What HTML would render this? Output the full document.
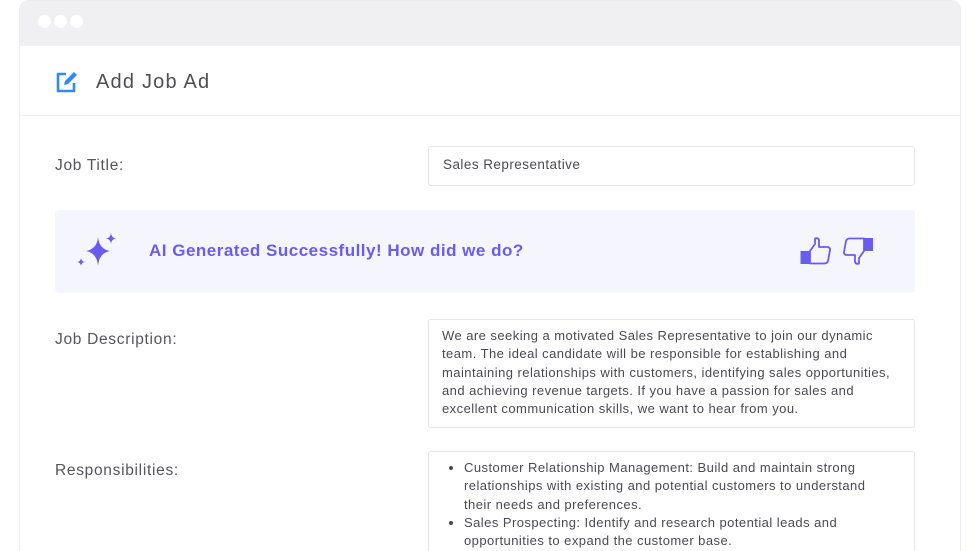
<!DOCTYPE html>
<html><head><style>
*{margin:0;padding:0;box-sizing:border-box}
html,body{width:980px;height:551px;overflow:hidden}
body{background:#fff;font-family:"Liberation Sans",sans-serif;position:relative}
.win{position:absolute;left:19px;top:0;width:942px;height:551px;border:1px solid #ececf0;border-bottom:none;border-radius:10px 10px 0 0;overflow:hidden;background:#fff}
.bar{height:45px;background:#f0f0f3}
.dot{position:absolute;top:14px;width:13px;height:13px;border-radius:50%;background:#fff}
.hdr{position:absolute;left:0;top:45px;width:100%;height:70px;border-bottom:1px solid #f0f0f2}
.t{position:absolute;color:#4a4a52;white-space:nowrap}
.box{position:absolute;border:1px solid #e6e6ea;border-radius:3px;background:#fff;font-size:13px;color:#4a4a52;letter-spacing:0.45px;white-space:nowrap;overflow:hidden}
.lbl{position:absolute;font-size:15.5px;color:#55555c;letter-spacing:0.7px}
</style></head><body>
<div class="win">
<div class="bar"></div>
<div class="dot" style="left:18px"></div><div class="dot" style="left:34px"></div><div class="dot" style="left:50px"></div>
<div class="hdr"></div>
</div>
<svg style="position:absolute;left:55px;top:71px" width="24" height="23" viewBox="0 0 24 23"><path d="M11 3H3v17h16v-8" fill="none" stroke="#2f8af5" stroke-width="2.6" stroke-linejoin="round"/><path d="M9 14l1-4 9-9 3 3-9 9z" fill="#2f8af5"/></svg>
<div class="t" style="left:96px;top:71px;font-size:20px;color:#4e4e55;letter-spacing:1.2px">Add Job Ad</div>
<div class="lbl" style="left:55px;top:157px">Job Title:</div>
<div class="box" style="left:428px;top:146px;width:487px;height:40px;padding:10px 14px;font-size:13.5px">Sales Representative</div>
<div style="position:absolute;left:55px;top:210px;width:860px;height:83px;background:#f5f5fd;border-radius:4px"></div>
<svg style="position:absolute;left:76px;top:233px" width="42" height="38" viewBox="0 0 42 38"><path d="M22 4Q23 16 34 18Q23 20 22 33Q21 20 10 18Q21 16 22 4Z" fill="#6a5cf0"/><path d="M35 0Q35.5 5 40 5.5Q35.5 6 35 11Q34.5 6 30 5.5Q34.5 5 35 0Z" fill="#6a5cf0"/><path d="M5 25Q5.4 28.6 9 29Q5.4 29.4 5 33Q4.6 29.4 1 29Q4.6 28.6 5 25Z" fill="#6a5cf0"/></svg>
<div class="t" style="left:149px;top:241px;font-size:17px;font-weight:bold;color:#6a5cf0;letter-spacing:0.5px">AI Generated Successfully! How did we do?</div>
<svg style="position:absolute;left:800px;top:237px" width="32" height="28" viewBox="0 0 32 28"><rect x="0.5" y="14" width="9" height="13" fill="#6a5cf0"/><path d="M10 14L15 7V1.5Q18 0.5 19 3V10H28Q30.5 11 30 13L28 24Q27 26.5 24.5 26.5H10Z" fill="none" stroke="#6a5cf0" stroke-width="1.8" stroke-linejoin="round"/></svg>
<svg style="position:absolute;left:842px;top:237px" width="32" height="28" viewBox="0 0 32 28"><rect x="22" y="1" width="9" height="13" fill="#6a5cf0"/><path d="M22 14L17 21V26.5Q14 27.5 13 25V18H4Q1.5 17 2 15L4 4Q5 1.5 7.5 1.5H22Z" fill="none" stroke="#6a5cf0" stroke-width="1.8" stroke-linejoin="round"/></svg>
<div class="lbl" style="left:55px;top:331px">Job Description:</div>
<div class="box" style="left:428px;top:319px;width:487px;height:109px;padding:7px 13px;line-height:18.3px">We are seeking a motivated Sales Representative to join our dynamic<br>team. The ideal candidate will be responsible for establishing and<br>maintaining relationships with customers, identifying sales opportunities,<br>and achieving revenue targets. If you have a passion for sales and<br>excellent communication skills, we want to hear from you.</div>
<div class="lbl" style="left:55px;top:462px">Responsibilities:</div>
<div class="box" style="left:428px;top:451px;width:487px;height:100px;border-bottom:none;border-radius:3px 3px 0 0;padding:7px 13px 0 35px;line-height:18.3px">
<ul style="list-style:disc"><li>Customer Relationship Management: Build and maintain strong<br>relationships with existing and potential customers to understand<br>their needs and preferences.</li><li>Sales Prospecting: Identify and research potential leads and<br>opportunities to expand the customer base.</li></ul></div>
</body></html>
